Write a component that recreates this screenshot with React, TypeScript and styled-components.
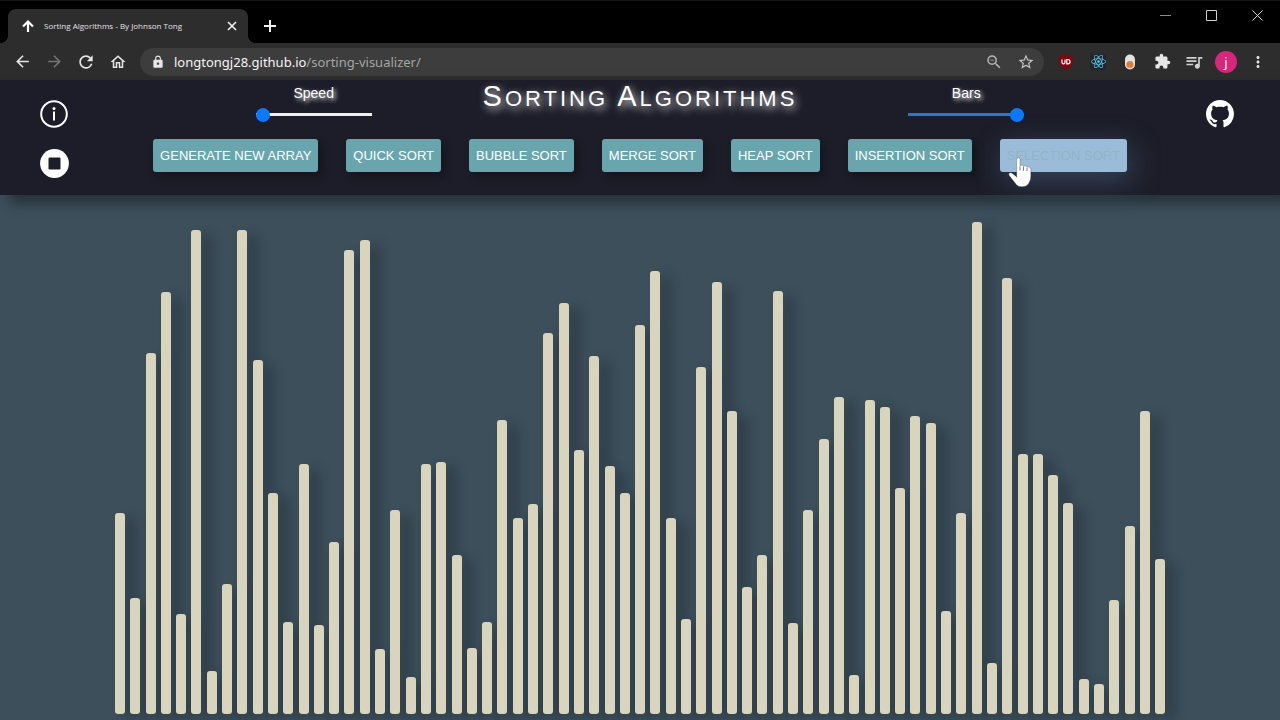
import React from "react";
import styled, { createGlobalStyle } from "styled-components";
import {
  MdArrowBack,
  MdArrowForward,
  MdRefresh,
  MdOutlineHome,
  MdLock,
  MdOutlineZoomOut,
  MdStarBorder,
  MdExtension,
  MdQueueMusic,
  MdMoreVert,
} from "react-icons/md";
import { FaReact } from "react-icons/fa";

const GlobalStyle = createGlobalStyle`
  *, *::before, *::after { box-sizing: border-box; }
  body {
    margin: 0;
    background: #3c4f5b;
    color: #fff;
    font-family: "Liberation Sans", Arial, sans-serif;
  }
  button { font: inherit; color: inherit; border: 0; padding: 0; background: none; }
  svg { display: block; }
`;

const Page = styled.div`
  display: flex;
  flex-direction: column;
  min-height: 100vh;
`;

/* Browser window */

const Browser = styled.div`
  font-family: "Noto Sans", "Open Sans", sans-serif;
`;

const TabStrip = styled.div`
  display: flex;
  height: 43px;
  padding-left: 8px;
  background: #000;
  border-top: 1px solid #161616;
`;

const Tab = styled.div`
  position: relative;
  display: flex;
  align-items: center;
  width: 240px;
  height: 34px;
  margin-top: 8px;
  padding: 0 9px 0 12px;
  gap: 8px;
  background: #2d2d2d;
  border-radius: 8px 8px 0 0;

  &::before,
  &::after {
    content: "";
    position: absolute;
    bottom: 0;
    width: 8px;
    height: 8px;
  }
  &::before {
    right: 100%;
    background: radial-gradient(circle at 0 0, transparent 8px, #2d2d2d 8px);
  }
  &::after {
    left: 100%;
    background: radial-gradient(circle at 100% 0, transparent 8px, #2d2d2d 8px);
  }
`;

const TabTitle = styled.span`
  flex: 1;
  font-family: "Open Sans", sans-serif;
  font-size: 8px;
  line-height: 12px;
  color: #e4e4e4;
  white-space: nowrap;
`;

const IconButton = styled.button<{ $size: number; $color?: string }>`
  display: grid;
  place-items: center;
  width: ${(p) => p.$size}px;
  height: ${(p) => p.$size}px;
  flex: none;
  color: ${(p) => p.$color ?? "#e6e6e6"};
`;

const NewTab = styled.div`
  display: flex;
  align-items: center;
  padding: 8px 0 0 12px;
`;

const WindowControls = styled.div`
  display: flex;
  margin-left: auto;
`;

const WindowButton = styled.button`
  display: grid;
  place-items: center;
  width: 46px;
  height: 28px;
`;

const Toolbar = styled.div`
  display: flex;
  align-items: center;
  height: 37px;
  padding: 0 12px;
  background: #2d2d2d;
`;

const NavButtons = styled.div`
  display: flex;
  gap: 12px;
  margin-right: 12px;
`;

const AddressBar = styled.div`
  display: flex;
  flex: 1;
  align-items: center;
  height: 28px;
  padding: 0 8px 0 11px;
  gap: 9px;
  background: #3d3d3d;
  border-radius: 14px;
`;

const Address = styled.a`
  flex: 1;
  font-size: 13px;
  line-height: 20px;
  color: #f5f5f5;
  text-decoration: none;
  white-space: nowrap;

  span { color: #a6a6a6; }
`;

const AddressActions = styled.div`
  display: flex;
  gap: 12px;
`;

const Extensions = styled.div`
  display: flex;
  align-items: center;
  gap: 12px;
  margin-left: 12px;
`;

const ReactBadge = styled.span`
  display: grid;
  place-items: center;
  width: 16px;
  height: 16px;
  border-radius: 2px;
  background: #20262c;
`;

const Avatar = styled.button`
  width: 22px;
  height: 22px;
  margin: 0 -1px;
  border-radius: 50%;
  background: #d9267d;
  font-size: 13px;
  line-height: 20px;
`;

/* Visualizer */

const Header = styled.header`
  position: relative;
  display: grid;
  grid-template-columns: minmax(0, 2fr) minmax(0, 13fr) minmax(0, 2fr);
  height: 115px;
  background: #1c1d28;
  box-shadow: 10px 8px 12px rgba(20, 24, 28, 0.55);
`;

const Side = styled.div<{ $end?: boolean }>`
  display: flex;
  flex-direction: column;
  align-items: ${(p) => (p.$end ? "flex-end" : "flex-start")};
  gap: 19px;
  padding: ${(p) => (p.$end ? "20px 46px 0 0" : "19px 0 0 39px")};
`;

const Controls = styled.div`
  display: flex;
  flex-direction: column;
  gap: 19px;
`;

const TopRow = styled.div`
  display: grid;
  grid-template-columns: repeat(3, minmax(0, 1fr));
  justify-items: center;
  height: 40px;
`;

const SliderField = styled.label`
  display: flex;
  flex-direction: column;
  align-items: center;
  gap: 4px;
  padding-top: 5px;
  font-size: 14px;
  line-height: 17px;
  text-shadow: 2px 2px 4px #fff;
`;

const Slider = styled.input<{ $track: string }>`
  appearance: none;
  width: 116px;
  height: 17px;
  margin: 0;
  background: linear-gradient(${(p) => p.$track}, ${(p) => p.$track}) center / 100% 3px no-repeat;

  &::-webkit-slider-thumb {
    appearance: none;
    width: 14px;
    height: 14px;
    border-radius: 50%;
    background: #0b79fb;
  }
`;

const Title = styled.h1`
  margin: 0;
  font-size: 22px;
  line-height: 32px;
  font-weight: 400;
  letter-spacing: 3px;
  text-transform: uppercase;
  white-space: nowrap;
  text-shadow: 2px 3px 8px #fff;
`;

const TitleWord = styled.span`
  display: inline-block;

  &::first-letter { font-size: 29px; }
`;

const ButtonRow = styled.div`
  display: flex;
  justify-content: center;
  gap: 28px;
`;

const ButtonSlot = styled.div`
  position: relative;
  flex: none;
`;

const SortButton = styled.button<{ $active?: boolean }>`
  height: 33px;
  padding: 0 7px;
  border-radius: 3px;
  font-size: 13px;
  line-height: 16px;
  white-space: nowrap;
  text-transform: uppercase;
  color: ${(p) => (p.$active ? "#90b5c6" : "#fff")};
  background: ${(p) => (p.$active ? "#9bbcd9" : "#68a5ad")};
  box-shadow: ${(p) =>
    p.$active ? "4px 8px 30px rgba(112, 152, 200, 0.35)" : "4px 5px 8px rgba(0, 0, 0, 0.3)"};
`;

const Pointer = styled.svg`
  position: absolute;
  left: 8px;
  top: 18px;
  pointer-events: none;
`;

const Chart = styled.main`
  display: flex;
  flex: 1;
  align-items: flex-end;
  justify-content: space-between;
  padding: 20px 114px 6px 115px;
`;

const Bar = styled.div`
  width: 10px;
  border-radius: 3px;
  background: #d8d4bd;
  box-shadow: 10px 5px 12px rgba(30, 40, 46, 0.45);
`;

const algorithms = [
  "Generate new array",
  "Quick sort",
  "Bubble sort",
  "Merge sort",
  "Heap sort",
  "Insertion sort",
  "Selection sort",
];

const values = [
  201, 116, 361, 422, 100, 484, 43, 130, 484, 354, 221, 92, 250, 89, 172, 464, 474, 65, 204, 37,
  250, 252, 159, 66, 92, 294, 196, 210, 381, 411, 264, 358, 248, 221, 389, 443, 196, 95, 347, 432,
  303, 127, 159, 423, 91, 204, 275, 317, 39, 314, 307, 226, 298, 291, 103, 201, 492, 51, 436, 260,
  260, 239, 211, 35, 30, 114, 188, 303, 155,
];

const BrowserChrome = () => (
  <Browser>
    <TabStrip>
      <Tab>
        <svg width="16" height="16" viewBox="0 0 16 16" fill="none" stroke="#fff" strokeWidth="2.2">
          <path d="M8 14V3.500M3 8.500L8 3.500L13 8.500" />
        </svg>
        <TabTitle>Sorting Algorithms - By Johnson Tong</TabTitle>
        <IconButton $size={14} aria-label="Close tab">
          <svg width="10" height="10" viewBox="0 0 10 10">
            <path d="M1 1L9 9M9 1L1 9" stroke="#f0f0f0" strokeWidth="1.600" />
          </svg>
        </IconButton>
      </Tab>
      <NewTab>
        <IconButton $size={20} aria-label="New tab">
          <svg width="12" height="12" viewBox="0 0 12 12">
            <path d="M6 0V12M0 6H12" stroke="#f0f0f0" strokeWidth="2" />
          </svg>
        </IconButton>
      </NewTab>
      <WindowControls>
        <WindowButton aria-label="Minimize">
          <svg width="11" height="11">
            <path d="M0 5.5H11" stroke="#8a8a8a" />
          </svg>
        </WindowButton>
        <WindowButton aria-label="Maximize">
          <svg width="11" height="11">
            <path d="M.5 .5H10.500V10.500H.5Z" fill="none" stroke="#d0d0d0" />
          </svg>
        </WindowButton>
        <WindowButton aria-label="Close">
          <svg width="11" height="11">
            <path d="M.5 .5L10.500 10.500M10.500 .5L.5 10.500" stroke="#e0e0e0" />
          </svg>
        </WindowButton>
      </WindowControls>
    </TabStrip>
    <Toolbar>
      <NavButtons>
        <IconButton $size={20} aria-label="Back"><MdArrowBack size={19} /></IconButton>
        <IconButton $size={20} $color="#757575" aria-label="Forward"><MdArrowForward size={19} /></IconButton>
        <IconButton $size={20} aria-label="Reload"><MdRefresh size={20} /></IconButton>
        <IconButton $size={20} aria-label="Home"><MdOutlineHome size={18} /></IconButton>
      </NavButtons>
      <AddressBar>
        <MdLock size={14} color="#e6e6e6" />
        <Address href="#">
          longtongj28.github.io<span>/sorting-visualizer/</span>
        </Address>
        <AddressActions>
          <IconButton $size={20} $color="#b4b4b4" aria-label="Zoom"><MdOutlineZoomOut size={18} /></IconButton>
          <IconButton $size={20} $color="#c4c4c4" aria-label="Bookmark"><MdStarBorder size={18} /></IconButton>
        </AddressActions>
      </AddressBar>
      <Extensions>
        <IconButton $size={20} aria-label="Content blocker">
          <svg width="16" height="16" viewBox="0 0 16 16">
            <path d="M8 0C10 1.400 12.500 2 15 2C15 8 15.200 12 8 16C.8 12 1 8 1 2C3.500 2 6 1.400 8 0Z" fill="#800610" />
            <path d="M4 5.500V8.500Q4 9.800 5.500 9.800T7 8.500V5.500M8.800 5.500V9.800H10Q12 9.800 12 7.700T10 5.500Z" fill="none" stroke="#fff" strokeWidth="1.200" />
          </svg>
        </IconButton>
        <IconButton $size={20} $color="#5ed3f3" aria-label="React tools">
          <ReactBadge><FaReact size={15} /></ReactBadge>
        </IconButton>
        <IconButton $size={20} aria-label="Toggle extension">
          <svg width="10" height="16" viewBox="0 0 10 16">
            <rect width="10" height="15" y=".5" rx="5" fill="#e4e2e0" />
            <circle cx="5" cy="10.500" r="3.600" fill="#e07c3c" />
          </svg>
        </IconButton>
        <IconButton $size={20} aria-label="Extensions"><MdExtension size={17} /></IconButton>
        <IconButton $size={20} $color="#cfcfcf" aria-label="Media"><MdQueueMusic size={20} /></IconButton>
        <Avatar aria-label="Profile">j</Avatar>
        <IconButton $size={20} aria-label="Menu"><MdMoreVert size={18} /></IconButton>
      </Extensions>
    </Toolbar>
  </Browser>
);

const App: React.FC = () => (
  <Page>
    <GlobalStyle />
    <BrowserChrome />
    <Header>
      <Side>
        <IconButton $size={30} aria-label="Information">
          <svg width="28" height="28" viewBox="0 0 28 28">
            <circle cx="14" cy="14" r="12.800" fill="none" stroke="#fff" strokeWidth="2" />
            <circle cx="14" cy="8.500" r="1.500" fill="#fff" />
            <path d="M14 11.500V20.500" stroke="#fff" strokeWidth="2" />
          </svg>
        </IconButton>
        <IconButton $size={30} aria-label="Stop">
          <svg width="29" height="29" viewBox="0 0 29 29">
            <circle cx="14.500" cy="14.500" r="14.400" fill="#fff" />
            <rect x="8.500" y="8.500" width="12" height="12" rx="1.200" fill="#1c1d28" />
          </svg>
        </IconButton>
      </Side>
      <Controls>
        <TopRow>
          <SliderField>
            Speed
            <Slider type="range" min={0} max={100} defaultValue={0} $track="#efefef" />
          </SliderField>
          <Title>
            <TitleWord>Sorting</TitleWord> <TitleWord>Algorithms</TitleWord>
          </Title>
          <SliderField>
            Bars
            <Slider type="range" min={0} max={100} defaultValue={100} $track="#2b76c8" />
          </SliderField>
        </TopRow>
        <ButtonRow>
          {algorithms.map((name) => {
            const active = name === "Selection sort";
            return (
              <ButtonSlot key={name}>
                <SortButton $active={active}>{name}</SortButton>
                {active && (
                  <Pointer width="24" height="31" viewBox="0 0 24 31">
                    <path
                      d="M8.700 2.500Q8.700 .7 10.300 .7T12 2.500V9.200Q12.600 7.800 14 8.200T15.500 9.800Q16.100 8.500 17.500 8.900T19 10.500Q19.500 9.500 21 10T22.800 12.200V20Q22.800 23 20.800 26.200Q19 29.800 13.500 29.800Q9.500 29.800 7.500 26.500L1.200 18.500Q.2 16.800 1.500 16T4.500 16.500L8.700 20Z"
                      fill="#fff"
                      stroke="#26303c"
                      strokeOpacity=".35"
                      strokeWidth=".8"
                    />
                    <path d="M12 9.500V13.500M15.500 10V13.800M19 10.800V14.200" stroke="#555e6c" strokeWidth=".8" />
                  </Pointer>
                )}
              </ButtonSlot>
            );
          })}
        </ButtonRow>
      </Controls>
      <Side $end>
        <IconButton $size={28} $color="#fff" aria-label="GitHub">
          <svg width="28" height="28" viewBox="0 0 16 16" fill="currentColor">
            <path d="M8 0C3.58 0 0 3.58 0 8c0 3.54 2.29 6.53 5.47 7.59.4.07.55-.17.55-.38 0-.19-.01-.82-.01-1.49-2.01.37-2.53-.49-2.69-.94-.09-.23-.48-.94-.82-1.13-.28-.15-.68-.52-.01-.53.63-.01 1.08.58 1.23.82.72 1.21 1.87.87 2.33.66.07-.52.28-.87.51-1.07-1.78-.2-3.64-.89-3.64-3.95 0-.87.31-1.59.82-2.15-.08-.2-.36-1.02.08-2.12 0 0 .67-.21 2.2.82.64-.18 1.32-.27 2-.27.68 0 1.36.09 2 .27 1.53-1.04 2.2-.82 2.2-.82.44 1.1.16 1.92.08 2.12.51.56.82 1.27.82 2.15 0 3.07-1.87 3.75-3.65 3.95.29.25.54.73.54 1.48 0 1.07-.01 1.93-.01 2.2 0 .21.15.46.55.38A8.013 8.013 0 0 0 16 8c0-4.42-3.58-8-8-8z" />
          </svg>
        </IconButton>
      </Side>
    </Header>
    <Chart>
      {values.map((value, index) => (
        <Bar key={index} style={{ height: value }} />
      ))}
    </Chart>
  </Page>
);

export default App;
